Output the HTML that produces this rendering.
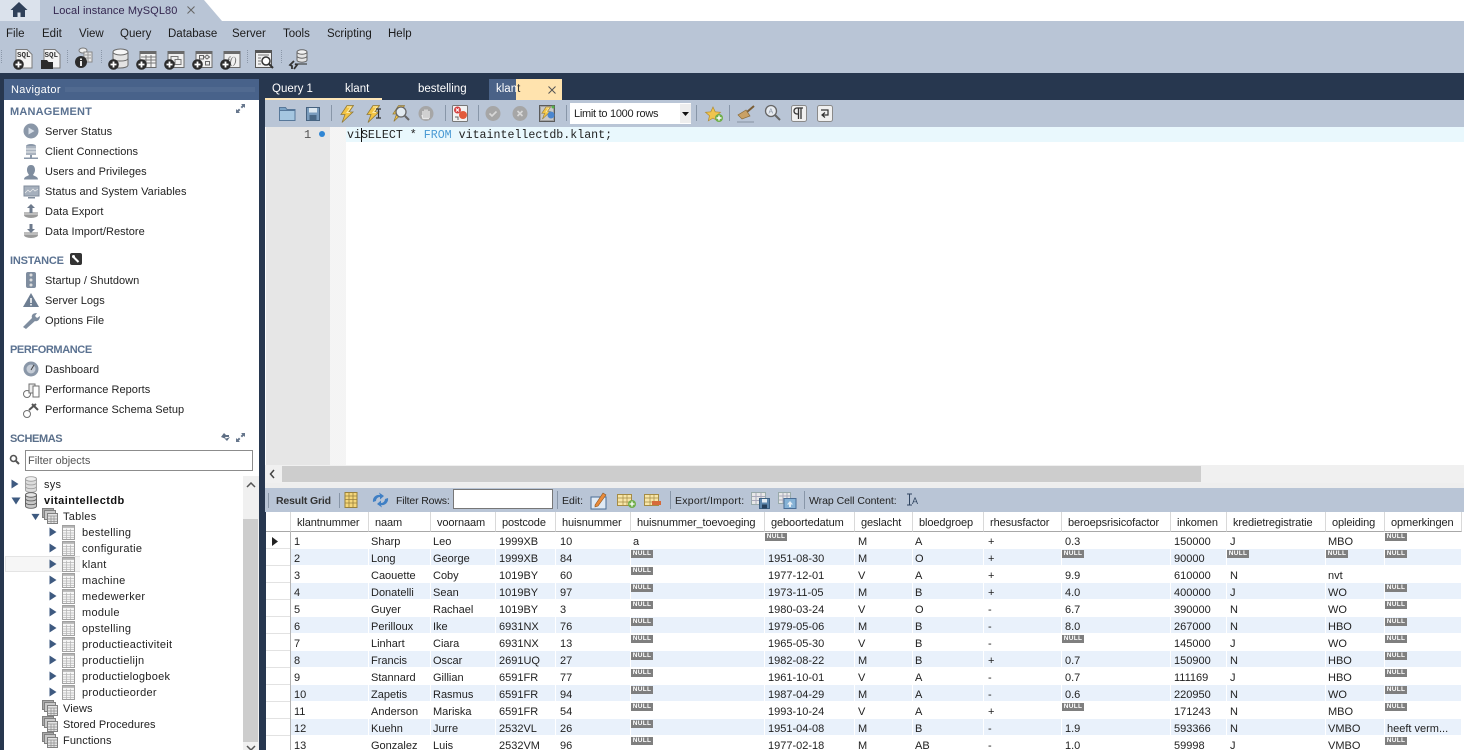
<!DOCTYPE html>
<html><head><meta charset="utf-8"><title>MySQL Workbench</title>
<style>
html,body{margin:0;padding:0;width:1464px;height:750px;overflow:hidden;background:#27374f;font-family:"Liberation Sans",sans-serif;font-size:11px;color:#222}
div,span,svg,input{position:absolute}
.t{white-space:nowrap;line-height:14px}
.m{font-size:11.500px;top:27px;color:#1c1c1c}
.s{left:45px;letter-spacing:.04px;color:#222;margin-top:1px}
.h{left:10px;font-weight:bold;color:#5b7291;margin-top:1px}
.q{color:#fff;font-size:11.500px;top:82px}
.tr{letter-spacing:.28px;margin-top:1px}
.tb{top:494px;font-size:10.500px;color:#222}
#g{left:265px;top:512px;width:1199px;height:238px;overflow:hidden;background:#fff}
table{position:absolute;left:1px;top:0;width:1196px;border-collapse:separate;border-spacing:0;table-layout:fixed;font-size:11px;background:#fff}
td,th{white-space:nowrap;overflow:hidden;position:relative;text-align:left;font-weight:normal;color:#222;box-sizing:content-box}
td{padding:4px 0 0 3px;height:13px;line-height:13px;border-right:1px solid #fff;box-shadow:inset 0 -1px 0 #fff}
th{padding:3px 0 0 6px;height:16px;line-height:16px;border-right:1px solid #d9d9d9;border-bottom:1px solid #a8a8a8;letter-spacing:-.1px}
td:nth-child(3),td:nth-child(4),td:nth-child(7),td:nth-child(10),td:nth-child(15),td:nth-child(16){padding-left:2px}
td:nth-child(6),td:nth-child(11){padding-left:4px}
tr.e td{background:#e9f1fb}
td:first-child{border-right:1px solid #b5b5b5;box-shadow:inset 0 -1px 0 #e2e2e2;background:#fff!important}
td b{position:absolute;left:0;top:1px;width:22px;height:8px;background:#7f7f7f;color:#fff;font:bold 6.500px/8px "Liberation Sans",sans-serif;text-align:center;letter-spacing:.3px}
</style></head><body>

<svg width="0" height="0" style="left:0;top:0">
<defs>
<symbol id="plus" viewBox="0 0 11 11"><circle cx="5.500" cy="5.500" r="5.300" fill="#2c2c2c"/><path d="M2.500 5.500h6M5.500 2.500v6" stroke="#fff" stroke-width="1.800"/></symbol>
<symbol id="tbl" viewBox="0 0 14 16"><rect x=".5" y=".5" width="13" height="15" fill="#f6f6f6" stroke="#9a9a9a"/><rect x="1" y="1" width="12" height="2" fill="#b5b5b5"/><path d="M1 6h12M1 8.500h12M1 11h12M1 13.500h12M5 4v11M9 4v11" stroke="#b5b5b5" stroke-width=".8"/></symbol>
<symbol id="db" viewBox="0 0 13 18"><path d="M.5 3v12c0 1.500 2.700 2.500 6 2.500s6-1 6-2.500V3" fill="#dcdcdc" stroke="#a0a0a0"/><ellipse cx="6.500" cy="3" rx="6" ry="2.500" fill="#eee" stroke="#a0a0a0"/><path d="M.5 7c0 1.500 2.700 2.500 6 2.500s6-1 6-2.500M.5 11c0 1.500 2.700 2.500 6 2.500s6-1 6-2.500" fill="none" stroke="#a0a0a0"/></symbol>
<symbol id="dbd" viewBox="0 0 13 18"><path d="M.5 3v12c0 1.500 2.700 2.500 6 2.500s6-1 6-2.500V3" fill="#c8c8c8" stroke="#606060"/><ellipse cx="6.500" cy="3" rx="6" ry="2.500" fill="#e5e5e5" stroke="#606060"/><path d="M.5 7c0 1.500 2.700 2.500 6 2.500s6-1 6-2.500M.5 11c0 1.500 2.700 2.500 6 2.500s6-1 6-2.500" fill="none" stroke="#606060"/></symbol>
<symbol id="stack" viewBox="0 0 16 16"><rect x=".5" y=".5" width="11" height="9" fill="#a9a9a9" stroke="#808080"/><rect x="2.500" y="2.500" width="11" height="9" fill="#c9c9c9" stroke="#808080"/><rect x="5.500" y="5.500" width="10" height="10" fill="#e4e4e4" stroke="#808080"/><path d="M6 8h9M6 11h9M6 13.500h9M9 8v7M12 8v7" stroke="#8d8d8d" stroke-width=".7"/></symbol>
<symbol id="bolt" viewBox="0 0 14 18"><path d="M7 .5h6.500L9 7h4L2 17.500 5 9.500H1z" fill="#f3c443" stroke="#8f7a3b" stroke-width=".8"/><path d="M7 2h4L7 7.500h3" fill="none" stroke="#fbeaa8"/></symbol>
<symbol id="r" viewBox="0 0 8 10"><path d="M.5 .5L7.500 5 .5 9.500z" fill="#3e5a80"/></symbol>
<symbol id="d" viewBox="0 0 10 8"><path d="M.5 .5h9L5 7.500z" fill="#3e5a80"/></symbol>
<symbol id="exp" viewBox="0 0 9 9"><path d="M5 0h4v4L7.700 2.700 6 4.400 4.600 3 6.300 1.300zM0 9V5l1.300 1.300L3 4.600 4.400 6 2.700 7.700 4 9z" fill="#66768c"/></symbol>
</defs></svg>

<!-- top strip -->
<div style="left:0;top:0;width:1464px;height:21px;background:#fff"></div>
<div style="left:0;top:0;width:40px;height:21px;background:#dbe2ec"></div>
<svg style="left:0;top:0" width="230" height="21"><path d="M40 0H204L222 21H40z" fill="#b9c5d6"/><path d="M19 2L10.500 10H13v7h4.500v-4.500h3V17H25v-7h2.500z" fill="#2f4059"/></svg>
<div class="t" style="left:53px;top:4px;font-size:11px;letter-spacing:.1px;color:#33264f">Local instance MySQL80</div>
<svg style="left:186px;top:5px" width="10" height="10"><path d="M1.500 1.500l7 7M8.500 1.500l-7 7" stroke="#666" stroke-width="1"/></svg>

<!-- menu + toolbar -->
<div style="left:0;top:21px;width:1464px;height:52px;background:#b9c5d6"></div>
<div class="t m" style="left:6px">File</div><div class="t m" style="left:42px">Edit</div><div class="t m" style="left:79px">View</div><div class="t m" style="left:120px">Query</div><div class="t m" style="left:168px">Database</div><div class="t m" style="left:232px">Server</div><div class="t m" style="left:283px">Tools</div><div class="t m" style="left:327px">Scripting</div><div class="t m" style="left:388px">Help</div>

<svg style="left:0;top:44px" width="320" height="29">
 <g stroke="#8b97a8" stroke-dasharray="1 1"><path d="M1.500 6v14M67.500 6v14M101.500 6v14M247.500 6v14M281.500 6v14"/></g>
 <path d="M16 5.500h11l5 5v13.500H16z" fill="#f4f4f4" stroke="#7a7a7a"/><text x="17" y="13" font-family="Liberation Mono" font-weight="bold" font-size="7.500" fill="#333">SQL</text>
 <use href="#plus" x="13" y="15" width="11" height="11"/>
 <path d="M44 5.500h11l5 5v13.500H44z" fill="#f4f4f4" stroke="#7a7a7a"/><text x="44.500" y="13" font-family="Liberation Mono" font-weight="bold" font-size="7.500" fill="#333">SQL</text>
 <path d="M41 16h6l1.500 2H53v7H41z" fill="#2c2c2c"/>
 <ellipse cx="83" cy="6.500" rx="4" ry="2.500" fill="#eee" stroke="#777"/><rect x="84" y="8" width="8" height="10" fill="#e7e7e7" stroke="#888"/><path d="M85 11h6M85 14h6M88 8v10" stroke="#999"/><circle cx="81" cy="18" r="6" fill="#2c2c2c"/><path d="M81 14.500v1.500M81 17v5" stroke="#fff" stroke-width="1.800"/>
 <path d="M113 8v13c0 2 3 3 7 3s8-1 8-3V8" fill="#e3e3e3" stroke="#6a6a6a"/><ellipse cx="120.500" cy="8" rx="7.500" ry="3" fill="#f6f6f6" stroke="#6a6a6a"/><path d="M113 14c0 2 3 3 7.500 3s7.500-1 7.500-3" fill="none" stroke="#6a6a6a"/>
 <use href="#plus" x="108" y="15" width="11" height="11"/>
 <rect x="140" y="7.500" width="16" height="16" fill="#f3f3f3" stroke="#6a6a6a"/><rect x="140" y="7" width="16" height="3" fill="#6a6a6a"/><path d="M146 11v12M151 11v12M141 13h15M141 16h15M141 19h15" stroke="#777"/>
 <use href="#plus" x="136" y="15" width="11" height="11"/>
 <rect x="168" y="7.500" width="16" height="16" fill="#f0f0f0" stroke="#6a6a6a"/><rect x="168" y="7" width="16" height="3" fill="#6a6a6a"/><rect x="171" y="12.500" width="7" height="6" fill="none" stroke="#777"/><rect x="175" y="15.500" width="6" height="5" fill="#f0f0f0" stroke="#777"/>
 <use href="#plus" x="164" y="15" width="11" height="11"/>
 <rect x="196" y="7.500" width="16" height="16" fill="#f0f0f0" stroke="#6a6a6a"/><rect x="196" y="7" width="16" height="3" fill="#6a6a6a"/><rect x="199.500" y="11.500" width="4" height="3.500" fill="none" stroke="#666"/><path d="M207 11l2.500 2-2.500 2-2.500-2z" fill="none" stroke="#666"/><rect x="205.500" y="17.500" width="4" height="3.500" fill="none" stroke="#666"/>
 <use href="#plus" x="192" y="15" width="11" height="11"/>
 <rect x="224" y="7.500" width="16" height="16" fill="#f0f0f0" stroke="#6a6a6a"/><rect x="224" y="7" width="16" height="3" fill="#6a6a6a"/><text x="227" y="20" font-family="Liberation Serif" font-style="italic" font-size="10" fill="#666">f()</text>
 <use href="#plus" x="220" y="15" width="11" height="11"/>
 <rect x="255.500" y="6.500" width="16" height="17" fill="#f0f0f0" stroke="#555"/><rect x="255" y="6" width="17" height="3" fill="#555"/><path d="M258 11h11M258 14h3M258 17h3M258 20h3" stroke="#777"/><circle cx="266" cy="17" r="4" fill="#fff" stroke="#333" stroke-width="1.500"/><path d="M269 20l4 4" stroke="#333" stroke-width="2"/>
 <path d="M297 8v8c0 1.300 2.200 2.200 5 2.200s5-.9 5-2.200V8" fill="#e5e5e5" stroke="#666"/><ellipse cx="302" cy="8" rx="5" ry="2.200" fill="#f2f2f2" stroke="#666"/><path d="M297 12c0 1.300 2.200 2.200 5 2.200s5-.9 5-2.200" fill="none" stroke="#666"/><path d="M295 20h12" stroke="#444" stroke-width="1.200"/><path d="M294 17l-4 4 2 1v3M294 25l3-4-2-1" fill="none" stroke="#333" stroke-width="1.800"/>
</svg>

<!-- Sidebar -->
<div style="left:4px;top:79px;width:255px;height:21px;background:#48628a"></div>
<div class="t" style="left:11px;top:83px;color:#fff;font-size:11px;letter-spacing:.3px">Navigator</div>
<div style="left:65px;top:87px;width:190px;height:5px;background-image:radial-gradient(#6d82a3 .6px,transparent .7px);background-size:2px 2px"></div>
<div style="left:4px;top:100px;width:255px;height:650px;background:#fff"></div>

<div class="t h" style="top:104px;letter-spacing:.2px">MANAGEMENT</div>
<svg style="left:236px;top:104px" width="9" height="9"><use href="#exp" width="9" height="9"/></svg>
<div class="t s" style="top:124px">Server Status</div><div class="t s" style="top:144px">Client Connections</div><div class="t s" style="top:164px">Users and Privileges</div><div class="t s" style="top:184px">Status and System Variables</div><div class="t s" style="top:204px">Data Export</div><div class="t s" style="top:224px">Data Import/Restore</div>
<div class="t h" style="top:253px;letter-spacing:-.2px">INSTANCE</div>
<svg style="left:70px;top:253px" width="12" height="12"><rect width="12" height="12" rx="2" fill="#333"/><path d="M3 3.500l5.500 5.500" stroke="#fff" stroke-width="2"/><circle cx="3.500" cy="3.500" r="1.500" fill="#fff"/></svg>
<div class="t s" style="top:273px">Startup / Shutdown</div><div class="t s" style="top:293px">Server Logs</div><div class="t s" style="top:313px">Options File</div>
<div class="t h" style="top:342px;letter-spacing:-.4px">PERFORMANCE</div>
<div class="t s" style="top:362px">Dashboard</div><div class="t s" style="top:382px">Performance Reports</div><div class="t s" style="top:402px">Performance Schema Setup</div>
<div class="t h" style="top:431px;color:#5a6f8a;letter-spacing:-.4px">SCHEMAS</div>
<svg style="left:220px;top:432px" width="26" height="11"><path d="M1 5l3-4 2 2h3v2H5l1 2zM10 5l-3 4-2-2" fill="#5f6f85"/><use href="#exp" x="16" y="1" width="9" height="9"/></svg>

<svg style="left:20px;top:120px" width="22" height="300">
 <circle cx="11" cy="11" r="7.500" fill="#8a97a8"/><path d="M8.500 7.500l6 3.500-6 3.500z" fill="#d8dfe8"/>
 <g fill="#8a97a8"><ellipse cx="11" cy="26" rx="5" ry="2"/><rect x="6" y="26" width="10" height="9" fill="#aab3bf"/><path d="M6 29h10M6 32h10" stroke="#fff" stroke-width=".7"/><rect x="10" y="35" width="2" height="3"/><rect x="4" y="37.500" width="14" height="1.500"/></g>
 <path d="M11 45c3 0 4 2.500 4 5s-1.500 4-2 5c1 1 5 1.500 5 4.500H4c0-3 4-3.500 5-4.500-.5-1-2-2.500-2-5s1-5 4-5z" fill="#7f8d9f"/>
 <rect x="4" y="66" width="15" height="10" fill="#a6b0bd" stroke="#808c9c"/><path d="M5 73l3-3 2 2 3-3 2 2 3-2" fill="none" stroke="#eee" stroke-width=".7"/><rect x="8" y="77" width="7" height="1.500" fill="#808c9c"/>
 <ellipse cx="11" cy="95" rx="7" ry="3" fill="#9a9a9a"/><rect x="4" y="92" width="14" height="3" fill="#bdbdbd"/><path d="M11 84l4 4h-2.500v5h-3v-5H7z" fill="#6d7a8c"/>
 <ellipse cx="11" cy="115" rx="7" ry="3" fill="#9a9a9a"/><rect x="4" y="112" width="14" height="3" fill="#bdbdbd"/><path d="M11 113l4-4h-2.500v-5h-3v5H7z" fill="#6d7a8c"/>
 <rect x="6" y="152" width="10" height="16" rx="2" fill="#7f8d9f"/><circle cx="11" cy="155" r="1.500" fill="#ddd"/><circle cx="11" cy="160" r="1.500" fill="#ddd"/><circle cx="11" cy="165" r="1.500" fill="#ddd"/>
 <path d="M11 173l8 14H3z" fill="#6e7e92"/><path d="M11 178v5M11 184v1.500" stroke="#fff" stroke-width="1.500"/>
 <path d="M3 207l9-9c-1-3 1-5 5-5l-2 3 2 2 3-2c0 4-3 6-5 5l-9 8z" fill="#7f8d9f"/>
 <circle cx="11" cy="249" r="7.500" fill="#8a97a8"/><circle cx="11" cy="249" r="4.500" fill="#c5ccd6"/><path d="M11 250l3-5" stroke="#444"/>
 <circle cx="7" cy="274" r="3.500" fill="#fff" stroke="#707070"/><rect x="9" y="264" width="6" height="9" fill="#eee" stroke="#707070"/><rect x="13" y="266" width="6" height="11" fill="#fff" stroke="#707070"/>
 <circle cx="7" cy="294" r="3.500" fill="#fff" stroke="#707070"/><path d="M9 290l7-6M12 284l6 6" stroke="#555" stroke-width="2"/>
</svg>

<!-- filter -->
<svg style="left:9px;top:454px" width="11" height="12"><circle cx="4.500" cy="4.500" r="3" fill="none" stroke="#555" stroke-width="1.600"/><path d="M7 7l3 3" stroke="#555" stroke-width="2"/></svg>
<div style="left:25px;top:450px;width:226px;height:19px;border:1px solid #8c8c8c;background:#fff"></div>
<div class="t" style="left:28px;top:454px;color:#555">Filter objects</div>

<!-- tree -->
<svg style="left:0;top:476px" width="80" height="274">
 <use href="#r" x="11" y="3" width="8" height="10"/><use href="#db" x="25" y="0" width="12" height="17"/>
 <use href="#d" x="11" y="21" width="10" height="8"/><use href="#dbd" x="25" y="16" width="12" height="17"/>
 <use href="#d" x="31" y="37" width="9" height="8"/><use href="#stack" x="42" y="32" width="16" height="16"/>
 <use href="#r" x="49" y="51" width="8" height="10"/><use href="#tbl" x="62" y="49" width="13" height="15"/>
 <use href="#r" x="49" y="67" width="8" height="10"/><use href="#tbl" x="62" y="65" width="13" height="15"/>
 <rect x="5.500" y="80.500" width="236" height="15" fill="#f6f6f6" stroke="#e4e4e4"/>
 <use href="#r" x="49" y="83" width="8" height="10"/><use href="#tbl" x="62" y="81" width="13" height="15"/>
 <use href="#r" x="49" y="99" width="8" height="10"/><use href="#tbl" x="62" y="97" width="13" height="15"/>
 <use href="#r" x="49" y="115" width="8" height="10"/><use href="#tbl" x="62" y="113" width="13" height="15"/>
 <use href="#r" x="49" y="131" width="8" height="10"/><use href="#tbl" x="62" y="129" width="13" height="15"/>
 <use href="#r" x="49" y="147" width="8" height="10"/><use href="#tbl" x="62" y="145" width="13" height="15"/>
 <use href="#r" x="49" y="163" width="8" height="10"/><use href="#tbl" x="62" y="161" width="13" height="15"/>
 <use href="#r" x="49" y="179" width="8" height="10"/><use href="#tbl" x="62" y="177" width="13" height="15"/>
 <use href="#r" x="49" y="195" width="8" height="10"/><use href="#tbl" x="62" y="193" width="13" height="15"/>
 <use href="#r" x="49" y="211" width="8" height="10"/><use href="#tbl" x="62" y="209" width="13" height="15"/>
 <use href="#stack" x="42" y="224" width="16" height="16"/><use href="#stack" x="42" y="240" width="16" height="16"/><use href="#stack" x="42" y="256" width="16" height="16"/>
</svg>
<div class="t tr" style="left:44px;top:477px">sys</div>
<div class="t" style="left:44px;top:494px;font-weight:bold;letter-spacing:.45px;color:#111">vitaintellectdb</div>
<div class="t tr" style="left:63px;top:509px">Tables</div>
<div class="t tr" style="left:82px;top:525px">bestelling</div><div class="t tr" style="left:82px;top:541px">configuratie</div><div class="t tr" style="left:82px;top:557px">klant</div><div class="t tr" style="left:82px;top:573px">machine</div><div class="t tr" style="left:82px;top:589px">medewerker</div><div class="t tr" style="left:82px;top:605px">module</div><div class="t tr" style="left:82px;top:621px">opstelling</div><div class="t tr" style="left:82px;top:637px">productieactiviteit</div><div class="t tr" style="left:82px;top:653px">productielijn</div><div class="t tr" style="left:82px;top:669px">productielogboek</div><div class="t tr" style="left:82px;top:685px">productieorder</div>
<div class="t tr" style="left:63px;top:701px;letter-spacing:.1px">Views</div><div class="t tr" style="left:63px;top:717px;letter-spacing:.05px">Stored Procedures</div><div class="t tr" style="left:63px;top:733px;letter-spacing:.1px">Functions</div>

<div style="left:243px;top:476px;width:16px;height:274px;background:#f0f0f0"></div>
<div style="left:243px;top:519px;width:15px;height:223px;background:#cdcdcd"></div>
<svg style="left:246px;top:482px" width="10" height="6"><path d="M1 5l4-4 4 4" fill="none" stroke="#555" stroke-width="1.500"/></svg>
<svg style="left:246px;top:745px" width="10" height="5"><path d="M1 1l4 4 4-4" fill="none" stroke="#555" stroke-width="1.500"/></svg>

<!-- Query tabs -->
<div style="left:265px;top:98px;width:117px;height:2px;background:#fde6b8"></div>
<div class="t q" style="left:272px">Query 1</div><div class="t q" style="left:345px">klant</div><div class="t q" style="left:418px">bestelling</div>
<div style="left:489px;top:79px;width:27px;height:21px;background:#4a6287"></div>
<div style="left:516px;top:79px;width:46px;height:21px;background:#ffe3ae"></div>
<div class="t q" style="left:496px">klan<span style="position:static;color:#3a3a3a">t</span></div>
<svg style="left:547px;top:85px" width="10" height="10"><path d="M1.500 1.500l7 7M8.500 1.500l-7 7" stroke="#555" stroke-width="1"/></svg>

<!-- Query toolbar -->
<div style="left:265px;top:100px;width:1199px;height:27px;background:#b9c5d6"></div>
<svg style="left:270px;top:100px" width="570" height="27">
 <path d="M9.500 9.500V7.500h6l1.500 2h8v11h-15.500z" fill="#7aa3c6" stroke="#57789a"/><rect x="9.500" y="10.500" width="15.500" height="10" fill="#a5c6e0" stroke="#57789a"/>
 <rect x="36.500" y="7.500" width="13" height="13" fill="#7a9cbd" stroke="#46627f"/><rect x="39" y="8" width="8" height="4.500" fill="#dde8f0"/><rect x="39.500" y="15" width="7" height="5.500" fill="#4a6885"/>
 <path d="M61.500 5v16M175.500 5v16M208.500 5v16M296.500 5v16M426.500 5v16M459.500 5v16" stroke="#8896a8"/>
 <use href="#bolt" x="70" y="5" width="14" height="18"/>
 <use href="#bolt" x="96" y="5" width="14" height="18"/><path d="M106 9h5M108.500 9v9M106 18h5" stroke="#333" stroke-width="1.200"/>
 <use href="#bolt" x="122" y="5" width="13" height="17"/><circle cx="131" cy="12" r="5" fill="#e2eaf0" stroke="#666" stroke-width="1.300"/><path d="M135 16l4 4" stroke="#666" stroke-width="2"/>
 <circle cx="156" cy="13.500" r="7.500" fill="#a6a6a6"/><path d="M153 18v-7M155 18v-8.500M157 18v-8.500M159 18v-7M152 15l1 3.500h6" stroke="#e8e8e8" stroke-width="1.300" fill="none"/>
 <rect x="182.500" y="5.500" width="15" height="16" rx="1" fill="#f2f2f2" stroke="#777"/><circle cx="187.500" cy="10" r="3.500" fill="#d43f3f"/><circle cx="193" cy="15" r="4" fill="#e25a3a"/><path d="M186 8.500l3 3M189 8.500l-3 3" stroke="#fff"/><path d="M185 17h3v3" stroke="#666" fill="none"/>
 <circle cx="223" cy="13.500" r="7.500" fill="#a6a6a6"/><path d="M219.500 13.500l2.500 2.500 4.500-4.500" stroke="#d8d8d8" stroke-width="1.600" fill="none"/>
 <circle cx="250" cy="13.500" r="7.500" fill="#a6a6a6"/><path d="M247.500 11l5 5M252.500 11l-5 5" stroke="#d8d8d8" stroke-width="1.600"/>
 <rect x="269.500" y="5.500" width="15" height="16" fill="#a3a3a3" stroke="#5b5b5b"/><rect x="271" y="7" width="12" height="13" fill="#c9c9c9"/><use href="#bolt" x="271" y="6" width="10" height="14"/><circle cx="281" cy="15" r="3.500" fill="#4a86cf"/><circle cx="283" cy="7" r="1.500" fill="#54b04a"/>
 <path d="M443 7l2.200 4.800 5.300.5-4 3.400 1.200 5.100-4.700-2.700-4.700 2.700 1.200-5.100-4-3.400 5.300-.5z" fill="#f0c44e" stroke="#b08c33" stroke-width=".7"/><circle cx="449" cy="18" r="4" fill="#6fae4a"/><path d="M446.500 18h5M449 15.500v5" stroke="#fff" stroke-width="1.400"/>
 <path d="M484 6l-7 6" stroke="#7a5d35" stroke-width="2"/><path d="M476 10l-8 5 4 4 8-3z" fill="#c9a165" stroke="#8a6c3a" stroke-width=".7"/><path d="M467 22h17" stroke="#98a3b3" stroke-width="1.500"/>
 <circle cx="501" cy="11" r="5.500" fill="#e8ecf1" stroke="#666" stroke-width="1.300"/><path d="M505 15l5 5" stroke="#666" stroke-width="2"/><text x="498.500" y="13.500" font-size="7" fill="#8a96a6" font-family="Liberation Sans">A</text>
 <rect x="521.500" y="5.500" width="15" height="16" rx="2" fill="#f0f0f0" stroke="#8a8a8a"/><path d="M531 8v11M528.500 8v11M533 8h-6a3 3 0 0 0 0 6h2" fill="none" stroke="#333" stroke-width="1.300"/>
 <rect x="547.500" y="5.500" width="15" height="16" rx="2" fill="#f0f0f0" stroke="#8a8a8a"/><path d="M551 10h7v5h-5M555 12.500L552 15l3 2.500" fill="none" stroke="#333" stroke-width="1.200"/>
</svg>
<div style="left:570px;top:103px;width:121px;height:21px;background:#fff"></div>
<div style="left:680px;top:104px;width:11px;height:19px;background:#eee"></div>
<svg style="left:682px;top:112px" width="8" height="5"><path d="M0 0h7L3.500 4z" fill="#111"/></svg>
<div class="t" style="left:574px;top:107px;font-size:11px;letter-spacing:-.28px;color:#222">Limit to 1000 rows</div>

<!-- Editor -->
<div style="left:265px;top:127px;width:1199px;height:338px;background:#fff"></div>
<div style="left:266px;top:127px;width:64px;height:338px;background:#e6e6e6"></div>
<div style="left:330px;top:127px;width:16px;height:338px;background-color:#fff;background-image:radial-gradient(#dcdcdc .7px,transparent .8px);background-size:2px 2px"></div>
<div style="left:346px;top:127px;width:1118px;height:15px;background:#e9f8fd"></div>
<div class="t" style="left:304px;top:128px;font:12px/14px 'Liberation Mono',monospace;color:#555">1</div>
<div style="left:319px;top:131px;width:6px;height:6px;border-radius:50%;background:#2f86d4"></div>
<div class="t" style="left:347px;top:129px;font:11.630px/14px 'Liberation Mono',monospace;color:#222">viSELECT * <span style="position:static;color:#4a9ad4">FROM</span> vitaintellectdb.klant;</div>
<div style="left:361px;top:128px;width:1px;height:14px;background:#111"></div>

<!-- hscroll -->
<div style="left:265px;top:465px;width:1199px;height:18px;background:#f0f0f0"></div>
<div style="left:282px;top:466px;width:919px;height:16px;background:#cdcdcd"></div>
<svg style="left:269px;top:469px" width="7" height="10"><path d="M5 1L1.500 5 5 9" fill="none" stroke="#444" stroke-width="1.500"/></svg>
<div style="left:265px;top:483px;width:1199px;height:5px;background:#eee"></div>

<!-- Result toolbar -->
<div style="left:265px;top:488px;width:1199px;height:24px;background:#b9c5d6"></div>
<div class="t tb" style="left:276px;font-weight:bold;letter-spacing:-.15px;color:#333">Result Grid</div>
<div class="t tb" style="left:396px;letter-spacing:-.15px">Filter Rows:</div>
<div style="left:453px;top:489px;width:98px;height:18px;background:#fff;border:1px solid #777"></div>
<div class="t tb" style="left:562px">Edit:</div>
<div class="t tb" style="left:675px;letter-spacing:.25px">Export/Import:</div>
<div class="t tb" style="left:809px;letter-spacing:-.05px">Wrap Cell Content:</div>
<svg style="left:265px;top:488px" width="660" height="24">
 <path d="M3.500 5v15M74.500 5v15M292.500 3v18M405.500 3v18M539.500 3v18" stroke="#8896a8"/>
 <rect x="80" y="4.500" width="12" height="15" fill="#f5d77a" stroke="#98803c"/><path d="M84 5v14M88 5v14M80 8h12M80 11.500h12M80 15h12" stroke="#98803c" stroke-width=".8"/>
 <path d="M108 14a6 6 0 0 1 7-7l-1-2.500 5 3.500-4 3.500v-2.500a4 4 0 0 0-4 4z" fill="#3f7fc4"/><path d="M123 10a6 6 0 0 1-7 7l1 2.500-5-3.500 4-3.500v2.500a4 4 0 0 0 4-4z" fill="#3f7fc4"/>
 <rect x="326" y="9" width="15" height="12" fill="#dfe9f4" stroke="#4a6d96"/><path d="M330 17l8-12 3 2-8 11-3 1z" fill="#e98a3a" stroke="#8a5420" stroke-width=".6"/>
 <rect x="352.500" y="6.500" width="14" height="11" fill="#f8e6a8" stroke="#a48b45"/><path d="M353 10h13M353 14h13M358 7v10M362 7v10" stroke="#a48b45" stroke-width=".7"/><circle cx="367" cy="16" r="4" fill="#6fae4a"/><path d="M364.500 16h5M367 13.500v5" stroke="#fff" stroke-width="1.300"/>
 <rect x="379.500" y="6.500" width="14" height="11" fill="#f8e6a8" stroke="#a48b45"/><path d="M380 10h13M380 14h13M385 7v10M389 7v10" stroke="#a48b45" stroke-width=".7"/><rect x="387" y="13" width="9" height="4" fill="#d66a3a"/>
 <rect x="486.500" y="4.500" width="14" height="12" fill="#e8e8e8" stroke="#9aa"/><path d="M491 5v11M496 5v11M487 8.500h13M487 12.500h13" stroke="#aab"/><rect x="494.500" y="10.500" width="10" height="10" fill="#5e87ad" stroke="#3c5f82"/><rect x="497" y="11" width="5" height="3.500" fill="#e5edf4"/><rect x="497" y="16.500" width="5" height="4" fill="#26405c"/>
 <rect x="513.500" y="4.500" width="12" height="11" fill="#e8e8e8" stroke="#9aa"/><path d="M518 5v10M522 5v10M514 8h11M514 12h11" stroke="#aab"/><rect x="519" y="10.500" width="12" height="10" fill="#86b2d6" stroke="#4a6d96"/><path d="M525 13l3 3.500h-2v2.500h-2v-2.500h-2z" fill="#e5edf4"/>
 <path d="M642 6h5M644.500 6v11M642 17h5" stroke="#2f4460"/><text x="647" y="16" font-size="9" fill="#2f4460" font-family="Liberation Sans">A</text>
</svg>

<!-- Grid -->
<div id="g">
<table>
<colgroup><col style="width:25px"><col style="width:78px"><col style="width:62px"><col style="width:65px"><col style="width:60px"><col style="width:75px"><col style="width:134px"><col style="width:90px"><col style="width:58px"><col style="width:71px"><col style="width:78px"><col style="width:109px"><col style="width:56px"><col style="width:99px"><col style="width:59px"><col style="width:77px"></colgroup>
<tr><th></th><th>klantnummer</th><th>naam</th><th>voornaam</th><th>postcode</th><th>huisnummer</th><th>huisnummer_toevoeging</th><th>geboortedatum</th><th>geslacht</th><th>bloedgroep</th><th>rhesusfactor</th><th>beroepsrisicofactor</th><th>inkomen</th><th>kredietregistratie</th><th>opleiding</th><th>opmerkingen</th></tr>
<tr><td></td><td>1</td><td>Sharp</td><td>Leo</td><td>1999XB</td><td>10</td><td>a</td><td><b>NULL</b></td><td>M</td><td>A</td><td>+</td><td>0.3</td><td>150000</td><td>J</td><td>MBO</td><td><b>NULL</b></td></tr>
<tr class="e"><td></td><td>2</td><td>Long</td><td>George</td><td>1999XB</td><td>84</td><td><b>NULL</b></td><td>1951-08-30</td><td>M</td><td>O</td><td>+</td><td><b>NULL</b></td><td>90000</td><td><b>NULL</b></td><td><b>NULL</b></td><td><b>NULL</b></td></tr>
<tr><td></td><td>3</td><td>Caouette</td><td>Coby</td><td>1019BY</td><td>60</td><td><b>NULL</b></td><td>1977-12-01</td><td>V</td><td>A</td><td>+</td><td>9.9</td><td>610000</td><td>N</td><td>nvt</td><td></td></tr>
<tr class="e"><td></td><td>4</td><td>Donatelli</td><td>Sean</td><td>1019BY</td><td>97</td><td><b>NULL</b></td><td>1973-11-05</td><td>M</td><td>B</td><td>+</td><td>4.0</td><td>400000</td><td>J</td><td>WO</td><td><b>NULL</b></td></tr>
<tr><td></td><td>5</td><td>Guyer</td><td>Rachael</td><td>1019BY</td><td>3</td><td><b>NULL</b></td><td>1980-03-24</td><td>V</td><td>O</td><td>-</td><td>6.7</td><td>390000</td><td>N</td><td>WO</td><td><b>NULL</b></td></tr>
<tr class="e"><td></td><td>6</td><td>Perilloux</td><td>Ike</td><td>6931NX</td><td>76</td><td><b>NULL</b></td><td>1979-05-06</td><td>M</td><td>B</td><td>-</td><td>8.0</td><td>267000</td><td>N</td><td>HBO</td><td><b>NULL</b></td></tr>
<tr><td></td><td>7</td><td>Linhart</td><td>Ciara</td><td>6931NX</td><td>13</td><td><b>NULL</b></td><td>1965-05-30</td><td>V</td><td>B</td><td>-</td><td><b>NULL</b></td><td>145000</td><td>J</td><td>WO</td><td><b>NULL</b></td></tr>
<tr class="e"><td></td><td>8</td><td>Francis</td><td>Oscar</td><td>2691UQ</td><td>27</td><td><b>NULL</b></td><td>1982-08-22</td><td>M</td><td>B</td><td>+</td><td>0.7</td><td>150900</td><td>N</td><td>HBO</td><td><b>NULL</b></td></tr>
<tr><td></td><td>9</td><td>Stannard</td><td>Gillian</td><td>6591FR</td><td>77</td><td><b>NULL</b></td><td>1961-10-01</td><td>V</td><td>A</td><td>-</td><td>0.7</td><td>111169</td><td>J</td><td>HBO</td><td><b>NULL</b></td></tr>
<tr class="e"><td></td><td>10</td><td>Zapetis</td><td>Rasmus</td><td>6591FR</td><td>94</td><td><b>NULL</b></td><td>1987-04-29</td><td>M</td><td>A</td><td>-</td><td>0.6</td><td>220950</td><td>N</td><td>WO</td><td><b>NULL</b></td></tr>
<tr><td></td><td>11</td><td>Anderson</td><td>Mariska</td><td>6591FR</td><td>54</td><td><b>NULL</b></td><td>1993-10-24</td><td>V</td><td>A</td><td>+</td><td><b>NULL</b></td><td>171243</td><td>N</td><td>MBO</td><td><b>NULL</b></td></tr>
<tr class="e"><td></td><td>12</td><td>Kuehn</td><td>Jurre</td><td>2532VL</td><td>26</td><td><b>NULL</b></td><td>1951-04-08</td><td>M</td><td>B</td><td>-</td><td>1.9</td><td>593366</td><td>N</td><td>VMBO</td><td>heeft verm...</td></tr>
<tr><td></td><td>13</td><td>Gonzalez</td><td>Luis</td><td>2532VM</td><td>96</td><td><b>NULL</b></td><td>1977-02-18</td><td>M</td><td>AB</td><td>-</td><td>1.0</td><td>59998</td><td>J</td><td>VMBO</td><td><b>NULL</b></td></tr>
</table>
</div>
<div style="left:265px;top:512px;width:1px;height:238px;background:#27374f"></div>
<svg style="left:272px;top:537px" width="7" height="9"><path d="M0 0l6 4.500L0 9z" fill="#222"/></svg>
</body></html>
